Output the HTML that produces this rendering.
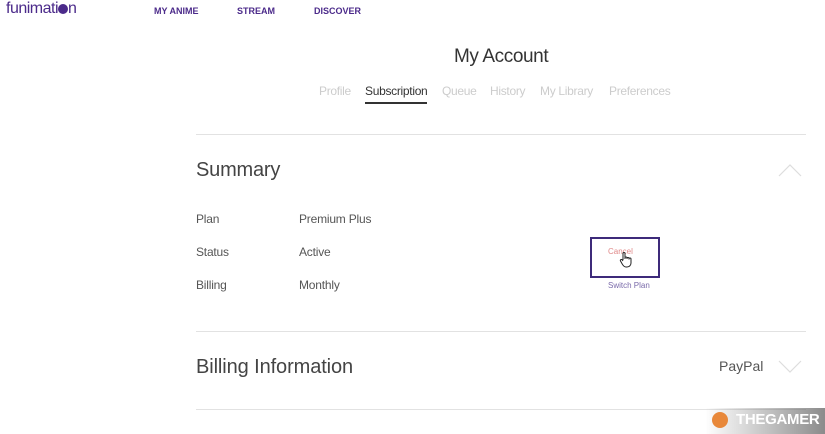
<!DOCTYPE html>
<html><head><style>
body{margin:0;width:825px;height:434px;background:#fff;font-family:"Liberation Sans",sans-serif;position:relative;overflow:hidden;color:#444}
.a{position:absolute;white-space:nowrap}
.nav{font-size:9px;font-weight:bold;color:#4b2a8a;top:6px}
.tab{font-size:12px;color:#ccc;top:84px;letter-spacing:-0.3px}
.lab{font-size:12px;color:#555;letter-spacing:-0.2px}
.hr{position:absolute;left:196px;width:610px;height:1px;background:#e2e2e2}
</style></head><body>
<div class="a" style="left:6px;top:0px;font-size:16px;color:#4b2a8a;letter-spacing:-0.5px">funimati<span style="display:inline-block;width:10px;height:10px;border-radius:50%;background:#4b2a8a;vertical-align:-1px"></span>n</div>
<div class="a nav" style="left:154px">MY ANIME</div>
<div class="a nav" style="left:237px">STREAM</div>
<div class="a nav" style="left:314px">DISCOVER</div>
<div class="a" style="left:454px;top:46px;font-size:19px;color:#333;letter-spacing:-0.4px">My Account</div>
<div class="a tab" style="left:319px">Profile</div>
<div class="a tab" style="left:365px;color:#333;border-bottom:2px solid #333;padding-bottom:4px">Subscription</div>
<div class="a tab" style="left:442px">Queue</div>
<div class="a tab" style="left:490px">History</div>
<div class="a tab" style="left:540px">My Library</div>
<div class="a tab" style="left:609px">Preferences</div>
<div class="hr" style="top:134px"></div>
<div class="a" style="left:196px;top:159px;font-size:20px;color:#444;letter-spacing:-0.2px">Summary</div>
<svg class="a" style="left:778px;top:163px" width="24" height="14"><path d="M1 13L12 2L23 13" fill="none" stroke="#ddd" stroke-width="1.2"/></svg>
<div class="a lab" style="left:196px;top:212px">Plan</div><div class="a lab" style="left:299px;top:212px">Premium Plus</div>
<div class="a lab" style="left:196px;top:245px">Status</div><div class="a lab" style="left:299px;top:245px">Active</div>
<div class="a lab" style="left:196px;top:278px">Billing</div><div class="a lab" style="left:299px;top:278px">Monthly</div>
<div class="a" style="left:590px;top:237px;width:66px;height:37px;border:2px solid #3d2a7a"></div>
<div class="a" style="left:608px;top:247px;font-size:8px;color:#e08a8a">Cancel</div>
<svg class="a" style="left:619px;top:251px" width="14" height="17"><path d="M4 9V2.5a1 1 0 0 1 2 0V8M6 7a1 1 0 0 1 2 0v1M8 7.5a1 1 0 0 1 2 0v1M10 8a1 1 0 0 1 2 0v4c0 2-1.5 4-4 4H7c-1.5 0-2.5-1-3.5-2.5L1.5 10a1 1 0 0 1 1.8-1L4 10" fill="#fff" stroke="#222" stroke-width="1"/></svg>
<div class="a" style="left:608px;top:281px;font-size:8px;color:#7a6aaa">Switch Plan</div>
<div class="hr" style="top:331px"></div>
<div class="a" style="left:196px;top:356px;font-size:20px;color:#444;letter-spacing:-0.1px">Billing Information</div>
<div class="a" style="left:719px;top:358px;font-size:14px;color:#555">PayPal</div>
<svg class="a" style="left:778px;top:360px" width="24" height="14"><path d="M1 1L12 12L23 1" fill="none" stroke="#ddd" stroke-width="1.2"/></svg>
<div class="hr" style="top:409px"></div>
<div class="a" style="left:705px;top:408px;width:120px;height:26px;background:linear-gradient(90deg,rgba(120,120,120,0),rgba(110,110,110,.8))"></div>
<div class="a" style="left:712px;top:412px;width:16px;height:16px;border-radius:50%;background:#e8883a"></div>
<div class="a" style="left:736px;top:411px;font-size:15px;font-weight:bold;color:#fff;letter-spacing:-0.3px">THEGAMER</div>
</body></html>
